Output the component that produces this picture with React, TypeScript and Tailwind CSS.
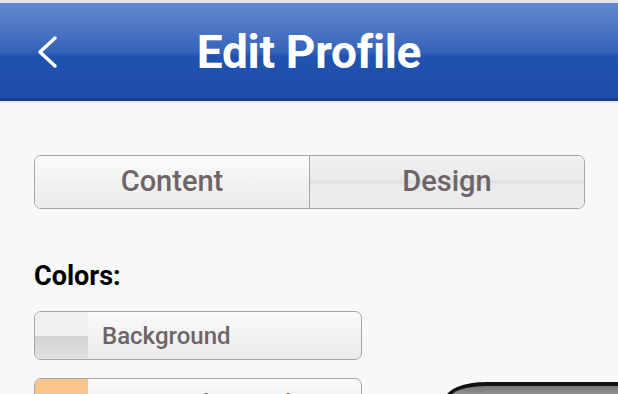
import React from "react";

export default function App() {
  return (
    <div
      className="relative w-[618px] h-[394px] overflow-hidden bg-[#f8f8f8]"
      style={{ fontFamily: "Roboto, 'Noto Sans', sans-serif" }}
    >
      {/* Header */}
      <div className="h-[3px] bg-[#dfe6f2]" />
      <div className="relative h-[95px] flex items-center justify-center bg-[linear-gradient(to_bottom,#6189cd_0%,#4b74c3_30%,#3461b8_52%,#2152b0_56%,#1e4ca9_100%)]">
        <svg
          className="absolute left-[35px] top-[32px]"
          width="24"
          height="34"
          viewBox="0 0 24 34"
          fill="none"
        >
          <path d="M20 3 L5 17 L20 31" stroke="white" strokeWidth="3.5" strokeLinecap="round" strokeLinejoin="round" />
        </svg>
        <span className="text-white font-bold text-[46px] leading-none tracking-[-0.3px] mt-[2px]">
          Edit Profile
        </span>
      </div>
      <div className="h-[3px] bg-[#173d86]" />
      <div className="h-[2px] bg-[#e9e9e9]" />

      {/* Content */}
      <div className="px-[34px] pt-[52px]">
        <div className="flex h-[54px] w-[551px] rounded-[7px] border border-[#a6a6a6] overflow-hidden">
          <div className="flex-1 flex items-center justify-center bg-[linear-gradient(to_bottom,#fbfbfb_0%,#f3f2f3_50%,#ecebec_100%)] text-[29px] font-medium text-[#6d6567]">
            Content
          </div>
          <div className="w-[1px] bg-[#a6a6a6]" />
          <div className="flex-1 flex items-center justify-center bg-[linear-gradient(to_bottom,#f1f1f1_0%,#eaeaea_45%,#dedede_50%,#ebebeb_56%,#ededed_100%)] text-[29px] font-medium text-[#6d6567]">
            Design
          </div>
        </div>

        <div className="mt-[54px] text-[27px] font-bold text-black leading-none">Colors:</div>

        <div className="mt-[21px] flex h-[49px] w-[328px] rounded-[7px] border border-[#a6a6a6] overflow-hidden bg-[linear-gradient(to_bottom,#fbfbfb_0%,#f3f2f3_50%,#ecebec_100%)]">
          <div className="w-[53px] flex flex-col">
            <div className="h-[24px] bg-[#f0f0f0]" />
            <div className="flex-1 bg-[linear-gradient(to_bottom,#d2d2d2,#e2e2e2)]" />
          </div>
          <div className="flex items-center pl-[14px] text-[24px] font-medium text-[#6d6567]">
            Background
          </div>
        </div>

        <div className="mt-[18px] flex h-[49px] w-[328px] rounded-[7px] border border-[#a6a6a6] overflow-hidden bg-[linear-gradient(to_bottom,#fbfbfb_0%,#f3f2f3_50%,#ecebec_100%)]">
          <div className="w-[53px] bg-[#f8c68c]" />
          <div className="flex items-center pl-[14px] text-[24px] font-medium text-[#6d6567]">
            Page Background
          </div>
        </div>
      </div>

      {/* Overlay shape at bottom right */}
      <div className="absolute left-[446px] top-[382px] w-[220px] h-[80px] rounded-tl-[40px_16px] border-t-[4px] border-l-[4px] border-[#111] bg-[linear-gradient(to_bottom,#777_0%,#cfcfcf_40%,#f5f5f5_100%)]" />
    </div>
  );
}
